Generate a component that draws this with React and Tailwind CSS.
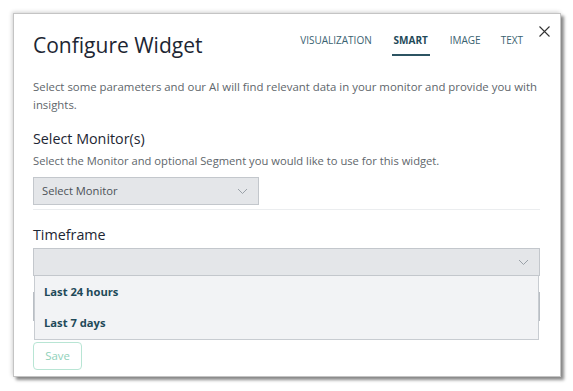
import React from "react";

const tabs = ["VISUALIZATION", "SMART", "IMAGE", "TEXT"];

function Chevron() {
  return (
    <svg width="11" height="7" viewBox="0 0 11 7" fill="none">
      <path d="M1 1l4.5 4.5L10 1" stroke="#9aa1a8" strokeWidth="1" />
    </svg>
  );
}

export default function App() {
  return (
    <div
      className="w-[573px] h-[391px] bg-white pt-[13px] pl-[13px]"
      style={{ fontFamily: '"Open Sans", "Noto Sans", sans-serif' }}
    >
      <div className="relative w-[548px] h-[364px] bg-white border border-[#c4c4c4] shadow-[3px_3px_3px_rgba(0,0,0,0.45),-1px_-1px_4px_rgba(0,0,0,0.18)] pl-[19px] pr-[20px] pt-[17px]">
        {/* close */}
        <button className="absolute right-[10px] top-[12px] text-[#333]">
          <svg width="11" height="11" viewBox="0 0 11 11">
            <path d="M0.5 0.5l10 10M10.5 0.5l-10 10" stroke="#333" strokeWidth="1.1" />
          </svg>
        </button>

        {/* header */}
        <div className="flex items-start justify-between">
          <h1 className="text-[21px] leading-[28px] text-[#1d2633]">Configure Widget</h1>
          <div className="flex gap-[20px] mr-[17px] pt-[1px] text-[10px] leading-[16px] text-[#3a6271]">
            {tabs.map((t) => (
              <div key={t} className="flex flex-col items-center">
                <span className={t === "SMART" ? "font-bold text-[#1f4a59]" : ""}>{t}</span>
                <div className={t === "SMART" ? "mt-[6px] h-[2px] w-[38px] bg-[#2c5462]" : "mt-[6px] h-[2px]"} />
              </div>
            ))}
          </div>
        </div>

        <p className="mt-[19px] text-[11.4px] leading-[18px] text-[#60666b]">
          Select some parameters and our AI will find relevant data in your monitor and provide you with insights.
        </p>

        <h2 className="mt-[15px] text-[14.3px] leading-[20px] text-[#1d2633]">Select Monitor(s)</h2>
        <p className="mt-[3px] text-[11.2px] leading-[18px] text-[#60666b]">
          Select the Monitor and optional Segment you would like to use for this widget.
        </p>
        <div className="mt-[7px] w-[226px] h-[28px] bg-[#e4e6e9] border border-[#c3c7cc] flex items-center justify-between pl-[8px] pr-[10px]">
          <span className="text-[11.2px] text-[#4c5258]">Select Monitor</span>
          <Chevron />
        </div>

        <div className="mt-[4px] h-px bg-[#ebedef]" />

        <h2 className="mt-[15px] text-[14.3px] leading-[20px] text-[#1d2633]">Timeframe</h2>
        <div className="relative mt-[3px]">
          <div className="h-[28px] bg-[#e4e6e9] border border-[#c3c7cc] flex items-center justify-end pr-[10px]">
            <Chevron />
          </div>
          <div className="mt-[16px] h-[29px] border-x border-[#b9bec4]" />
          <div className="absolute left-[1px] right-[1px] top-[27px] h-[65px] bg-[#f2f3f5] border border-[#c8ccd1] border-t-[#c3c7cc] flex flex-col pl-[9px] text-[11.2px] font-bold text-[#1f4a59]">
            <div className="h-[31px] flex items-center pt-[2px]">Last 24 hours</div>
            <div className="h-[31px] flex items-center pt-[1px]">Last 7 days</div>
          </div>
        </div>

        <button className="mt-[21px] h-[28px] w-[49px] rounded-[4px] border border-[#b8e5d4] bg-white text-[11.4px] text-[#8fd1b9]">
          Save
        </button>
      </div>
    </div>
  );
}
